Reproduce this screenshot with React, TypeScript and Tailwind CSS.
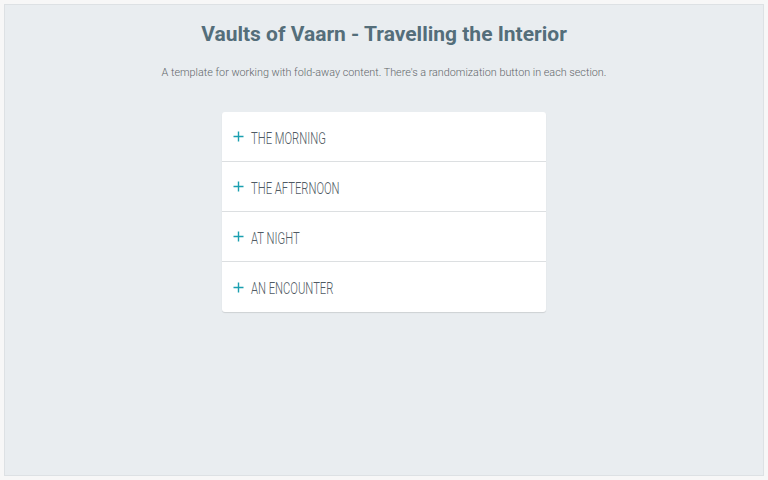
import React from 'react';

const sections = ['The Morning', 'The Afternoon', 'At Night', 'An Encounter'];

export default function App() {
  return (
    <div className="w-[768px] h-[480px] bg-[#f7f7f7] p-[4px]" style={{ fontFamily: 'Roboto, sans-serif' }}>
      <div className="h-[472px] border border-[#dde1e4] bg-[#e9edf0] flex flex-col items-center">
        <h1 className="mt-[14px] text-[21px] leading-[30px] font-bold text-[#546e7a]">
          Vaults of Vaarn - Travelling the Interior
        </h1>
        <p className="mt-[17px] text-[10.8px] leading-[14px] font-light text-[#62676b]">
          A template for working with fold-away content. There's a randomization button in each section.
        </p>
        <div className="mt-[32px] w-[324px] bg-white rounded-[3px] shadow-[0_1px_1px_rgba(0,0,0,0.12)]">
          {sections.map((s, i) => (
            <button
              key={s}
              className={`w-full h-[50px] flex items-center px-[11px] gap-[7px] text-left ${i < sections.length - 1 ? 'border-b border-[#dcdfe1]' : ''}`}
            >
              <svg width="11" height="11" viewBox="0 0 11 11" className="shrink-0">
                <path d="M5.5 0.5v10M0.5 5.5h10" stroke="#1a9fb0" strokeWidth="1.4" />
              </svg>
              <span className="inline-block origin-left scale-x-[0.66] translate-y-[1px] uppercase text-[17px] leading-[20px] font-light text-[#4f5a63] whitespace-nowrap">
                {s}
              </span>
            </button>
          ))}
        </div>
      </div>
    </div>
  );
}
